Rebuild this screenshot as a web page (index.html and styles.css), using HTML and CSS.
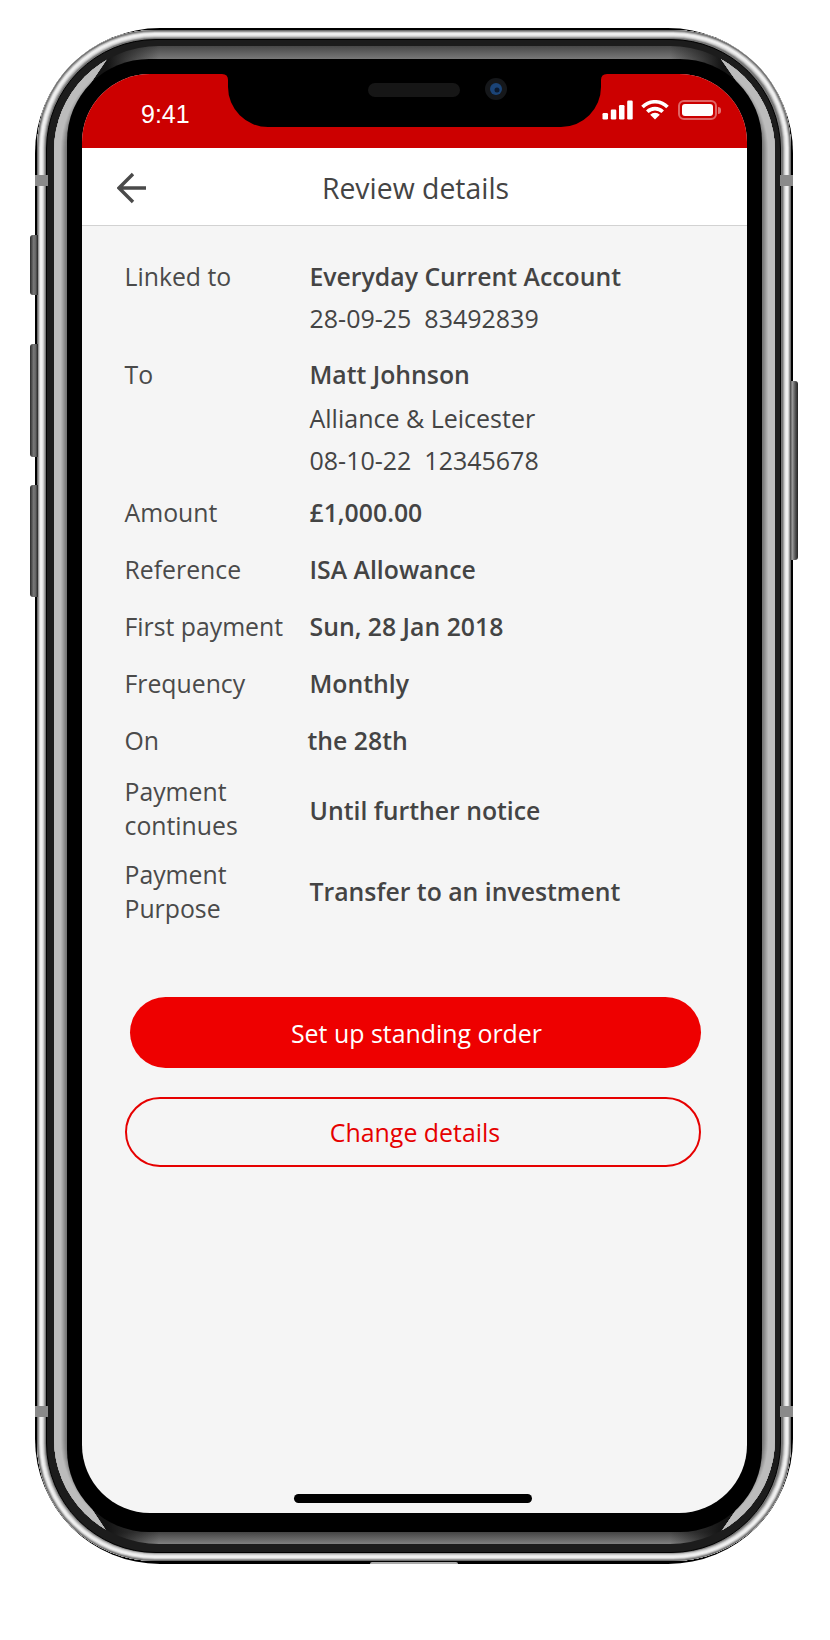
FILE: index.html
```html
<!DOCTYPE html>
<html lang="en">
<head>
<meta charset="utf-8">
<title>Review details</title>
<link rel="stylesheet" href="styles.css">
</head>
<body>
<div class="device">
  <span class="side-btn left b1"></span>
  <span class="side-btn left b2"></span>
  <span class="side-btn left b3"></span>
  <span class="side-btn right b4"></span>
  <span class="bump"></span>
  <div class="metal">
    <div class="dark">
      <div class="band">
        <div class="bezel">
          <div class="screen">
            <div class="status">
              <svg class="notch" width="385" height="53" viewBox="0 0 385 53">
                <path d="M0 0H385Q379 0 379 6V13A40 40 0 0 1 339 53H46A40 40 0 0 1 6 13V6Q6 0 0 0Z" fill="#000"/>
                <rect x="146" y="9" width="92" height="14" rx="7" fill="#161616"/>
                <circle cx="274" cy="15" r="11" fill="#15171a"/>
                <circle cx="274" cy="15" r="6" fill="#1b4478"/>
                <circle cx="275" cy="16" r="2.5" fill="#0b1a30"/>
              </svg>
              <span class="time">9:41</span>
              <div class="indicators">
                <svg class="signal" width="31" height="20" viewBox="0 0 31 20" fill="#fff">
                  <rect x="0.5" y="13" width="5.5" height="6.5" rx="1.2"/>
                  <rect x="8.8" y="9.5" width="5.5" height="10" rx="1.2"/>
                  <rect x="17" y="5" width="5.5" height="14.5" rx="1.2"/>
                  <rect x="25.2" y="0.5" width="5.5" height="19" rx="1.2"/>
                </svg>
                <svg class="wifi" width="28" height="20" viewBox="0 0 27 20" fill="none" stroke="#fff" stroke-width="3.6">
                  <path d="M1 7A17.500 17.500 0 0 1 26 7"/>
                  <path d="M5.800 11.800A11 11 0 0 1 21.200 11.800"/>
                  <path d="M13.500 19.500L8.700 14.700A6.800 6.800 0 0 1 18.300 14.700Z" fill="#fff" stroke="none"/>
                </svg>
                <span class="battery"><span class="charge"></span></span>
                <span class="nub"></span>
              </div>
            </div>
            <header class="appbar">
              <svg class="back" width="30" height="32" viewBox="0 0 30 32" fill="none" stroke="#4a4a4a" stroke-width="3.4">
                <path d="M29 16H3M16 2L2 16L16 30"/>
              </svg>
              <h1 class="title">Review details</h1>
            </header>
            <main class="content">
              <div class="row top gap-a">
                <div class="label">Linked to</div>
                <div class="value"><div class="strong">Everyday Current Account</div><div class="digits">28-09-25&nbsp; 83492839</div></div>
              </div>
              <div class="row top gap-b">
                <div class="label">To</div>
                <div class="value"><div class="strong">Matt Johnson</div><div class="second digits">Alliance &amp; Leicester</div><div class="digits">08-10-22&nbsp; 12345678</div></div>
              </div>
              <div class="row"><div class="label">Amount</div><div class="value strong">£1,000.00</div></div>
              <div class="row"><div class="label">Reference</div><div class="value strong">ISA Allowance</div></div>
              <div class="row"><div class="label">First payment</div><div class="value strong">Sun, 28 Jan 2018</div></div>
              <div class="row"><div class="label">Frequency</div><div class="value strong">Monthly</div></div>
              <div class="row gap-c"><div class="label">On</div><div class="value strong nudge">the 28th</div></div>
              <div class="row"><div class="label two">Payment continues</div><div class="value strong low">Until further notice</div></div>
              <div class="row"><div class="label two">Payment Purpose</div><div class="value strong">Transfer to an investment</div></div>
              <div class="actions">
                <button class="btn primary">Set up standing order</button>
                <button class="btn outline">Change details</button>
              </div>
            </main>
            <div class="home"></div>
          </div>
        </div>
      </div>
    </div>
  </div>
  <span class="antenna l t"></span>
  <span class="antenna r t"></span>
  <span class="antenna l u"></span>
  <span class="antenna r u"></span>
</div>
</body>
</html>
```

FILE: styles.css
```css
* { box-sizing: border-box; }
html, body { margin: 0; background: #fff; }
body { font-family: "Open Sans", "Liberation Sans", sans-serif; color: #444; height: 1640px; overflow: hidden; }

.device {
  position: relative; display: flex; width: 758px; height: 1536px;
  margin: 28px 0 0 35px; padding: 2px 2px 3px 2px;
  background: #000; border-radius: 125px;
}
.metal {
  flex: 1; display: flex; padding: 9px 10px 8px 9px;
  border-radius: 118px; background: #777;
  box-shadow:
    inset 0 0 0 1px #6e6e6e, inset 0 0 0 2px #999, inset 0 0 0 3px #d0d0d0,
    inset 0 0 0 4px #eee, inset 0 0 0 5px #f0f0f0, inset 0 0 0 6px #e4e4e4,
    inset 0 0 0 7px #cacaca, inset 0 0 0 8px #a0a0a0;
}
.dark {
  flex: 1; display: flex; padding: 6px 5px 8px 7px;
  border: 1px solid #000; border-radius: 110px; background: #1c1c1c;
}
.band {
  position: relative; flex: 1; display: flex; padding: 13px 13px 12px 13px;
  border-radius: 105px;
  background:
    linear-gradient(to right, #141414 53px, rgba(20,20,20,0) 105px, rgba(20,20,20,0) calc(100% - 105px), #141414 calc(100% - 53px)),
    linear-gradient(to bottom, #484848, #787878 13px, #444 calc(100% - 12px), #808080 100%);
}
.band::before, .band::after {
  content: ""; position: absolute; inset: 0; border-radius: 105px;
  box-shadow:
    inset 0 0 0 7px #bcbcbc, inset 0 0 0 8px #b2b2b2, inset 0 0 0 9px #a6a6a6,
    inset 0 0 0 10px #999, inset 0 0 0 11px #8c8c8c, inset 0 0 0 12px #808080,
    inset 0 0 0 13px #777;
}
.band::before { clip-path: polygon(0 0, 53px 0, 53px 13px, 20px 62px, 20px calc(100% - 62px), 53px calc(100% - 12px), 53px 100%, 0 100%); }
.band::after { clip-path: polygon(100% 0, calc(100% - 54px) 0, calc(100% - 54px) 13px, calc(100% - 20px) 62px, calc(100% - 20px) calc(100% - 62px), calc(100% - 54px) calc(100% - 12px), calc(100% - 54px) 100%, 100% 100%); }
.bezel {
  position: relative; z-index: 1; flex: 1; display: flex;
  padding: 15px 15px 19px 15px; background: #000; border-radius: 82px;
}
.screen {
  position: relative; flex: 1; display: flex; flex-direction: column;
  border-radius: 68px; overflow: hidden; background: #f5f5f5;
}

/* status bar */
.status {
  position: relative; flex: none; height: 74px; background: #cc0000;
  display: flex; justify-content: space-between; padding: 26px 26px 0 59px; color: #fff;
}
.notch { position: absolute; left: 140px; top: 0; }
.time { font-family: "Liberation Sans", Arial, sans-serif; font-size: 25px; line-height: 28px; }
.indicators { display: flex; align-items: flex-start; }
.wifi { margin-left: 8px; }
.battery {
  display: block; width: 39px; height: 20px; margin-left: 9px; padding: 2px;
  border: 2px solid rgba(255,255,255,.4); border-radius: 6px;
}
.charge { display: block; height: 100%; background: #fff; border-radius: 3px; }
.nub { width: 3px; height: 7px; margin: 6.500px 0 0 1px; background: rgba(255,255,255,.45); border-radius: 0 3px 3px 0; }

/* app bar */
.appbar {
  position: relative; flex: none; height: 78px; padding: 3px 0 0 2px; display: flex; align-items: center; justify-content: center;
  background: #fff; border-bottom: 1px solid #d2d2d2;
}
.back { position: absolute; left: 35px; top: 24px; }
.title { margin: 0; font-size: 28.400px; font-weight: 400; line-height: 36px; color: #444; }

/* details */
.content { flex: 1; padding: 29px 46px 0 42.500px; font-size: 24.800px; line-height: 42px; }
.row { display: flex; align-items: center; padding-bottom: 15px; }
.row.top { align-items: flex-start; }
.gap-a { padding-bottom: 14px; }
.gap-b { padding-bottom: 10px; }
.gap-c { padding-bottom: 13px; }
.label { flex: none; width: 185px; color: #4a4a4a; }
.label.two { line-height: 34px; width: 160px; margin-right: 25px; }
.strong { font-weight: 600; color: #444; }
.digits { font-size: 25px; }
.second { margin-top: 2px; }
.nudge { margin-left: -2px; }
.low { margin-top: 3px; }
.actions { margin-top: 57px; display: flex; flex-direction: column; align-items: flex-end; gap: 29px; }
.btn {
  display: block; height: 71px; border-radius: 36px; font: 400 24.900px/32px "Open Sans", sans-serif;
}
.primary { width: 571px; padding: 0 0 0 2px; background: #ee0000; border: 0; color: #fff; }
.outline { width: 576px; height: 70px; padding: 0 0 0 4px; background: transparent; border: 2px solid #e60000; color: #e60000; }

.home { flex: none; align-self: center; width: 238px; height: 9px; margin: 0 3px 10px 0; background: #000; border-radius: 5px; }

/* hardware */
.side-btn {
  position: absolute; width: 8px;
  background: linear-gradient(to right, #2a2a2a, #777 45%, #666 70%, #222);
}
.side-btn.left { left: -5px; border-radius: 3px 0 0 3px; }
.side-btn.right { right: -5px; border-radius: 0 3px 3px 0; background: linear-gradient(to left, #222, #555 35%, #999 70%, #444); }
.b1 { top: 207px; height: 60px; }
.b2 { top: 316px; height: 113px; }
.b3 { top: 457px; height: 112px; }
.b4 { top: 353px; height: 179px; }
.bump { position: absolute; left: 335px; bottom: 0; width: 88px; height: 2px; background: #aaa; border-radius: 3px 3px 0 0; }
.antenna { position: absolute; width: 13px; height: 11px; background: #8a8a8a; z-index: 2; }
.antenna.l { left: 0; }
.antenna.r { right: 0; }
.antenna.t { top: 147px; }
.antenna.u { bottom: 147px; }
```
